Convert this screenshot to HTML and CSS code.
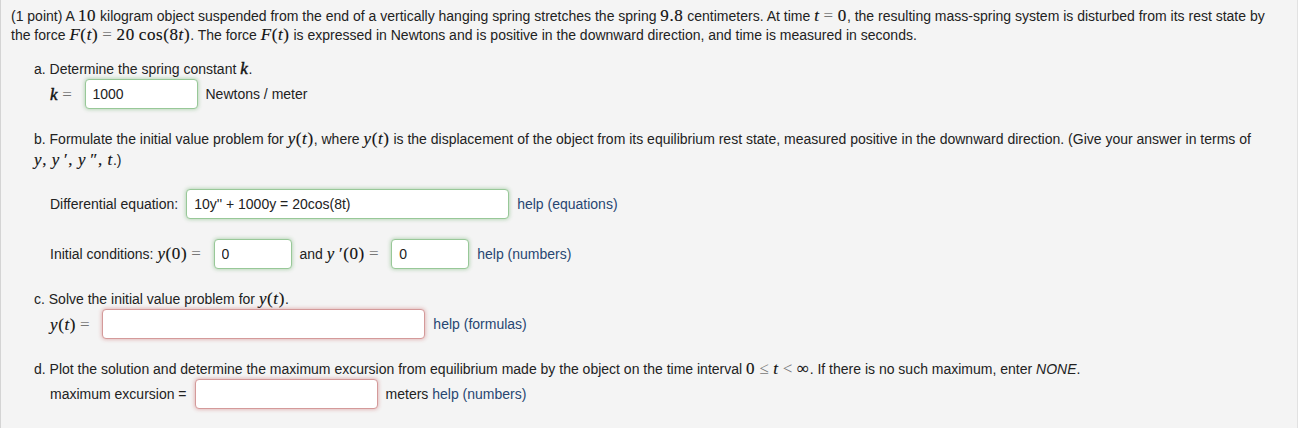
FILE: index.html
```html
<!DOCTYPE html>
<html>
<head>
<meta charset="utf-8">
<link rel="stylesheet" href="styles.css">
</head>
<body>
<div class="problem">
  <p class="intro">(1 point) A <span class="m">10</span> kilogram object suspended from the end of a vertically hanging spring stretches the spring <span class="m">9.8</span> centimeters. At time <span class="m"><i>t</i><span class="eq">=</span><span>0</span></span>, the resulting mass-spring system is disturbed from its rest state by the force <span class="m"><i>F</i><span>(</span><i>t</i><span>)</span><span class="eq">=</span><span>20&thinsp;cos(8</span><i>t</i><span>)</span></span>. The force <span class="m"><i>F</i><span>(</span><i>t</i><span>)</span></span> is expressed in Newtons and is positive in the downward direction, and time is measured in seconds.</p>

  <p class="q qa">a. Determine the spring constant <i class="m b">k</i>.</p>
  <div class="row">
    <span class="m"><i class="b">k</i><span class="eq">=</span></span>
    <input class="ans ok w113" type="text" value="1000" readonly>
    <span>Newtons / meter</span>
  </div>

  <p class="q qb">b. Formulate the initial value problem for <span class="m"><i>y</i><span>(</span><i>t</i><span>)</span></span>, where <span class="m"><i>y</i><span>(</span><i>t</i><span>)</span></span> is the displacement of the object from its equilibrium rest state, measured positive in the downward direction. (Give your answer in terms of <span class="m"><i>y</i><span>, </span><i>y</i><span>&thinsp;′, </span><i>y</i><span>&thinsp;″, </span><i>t</i></span>.)</p>
  <div class="row sp-b">
    <span>Differential equation:</span>
    <input class="ans ok w323" type="text" value="10y'' + 1000y = 20cos(8t)" readonly>
    <a class="help">help (equations)</a>
  </div>
  <div class="row sp">
    <span class="lbl"><span>Initial conditions: </span><span class="m"><i>y</i><span>(0)</span><span class="eq">=</span></span></span>
    <input class="ans ok w78" type="text" value="0" readonly>
    <span class="lbl"><span>and </span><span class="m"><i>y</i><span>&thinsp;′(0)</span><span class="eq">=</span></span></span>
    <input class="ans ok w78" type="text" value="0" readonly>
    <a class="help">help (numbers)</a>
  </div>

  <p class="q qc">c. Solve the initial value problem for <span class="m"><i>y</i><span>(</span><i>t</i><span>)</span></span>.</p>
  <div class="row">
    <span class="m"><i>y</i><span>(</span><i>t</i><span>)</span><span class="eq">=</span></span>
    <input class="ans bad w323" type="text" value="" readonly>
    <a class="help">help (formulas)</a>
  </div>

  <p class="q qc">d. Plot the solution and determine the maximum excursion from equilibrium made by the object on the time interval <span class="m"><span>0</span><span class="eq">≤</span><i>t</i><span class="eq">&lt;</span><span>∞</span></span>. If there is no such maximum, enter <em>NONE</em>.</p>
  <div class="row">
    <span>maximum excursion =</span>
    <input class="ans bad w183" type="text" value="" readonly>
    <span class="lbl"><span>meters </span><a class="help">help (numbers)</a></span>
  </div>
</div>
</body>
</html>
```
FILE: styles.css
```css
html, body {
  margin: 0;
  padding: 0;
  background: #f4f4f4;
}
.problem {
  box-sizing: border-box;
  width: 1298px;
  min-height: 428px;
  padding: 7px 20px 20px 10px;
  border-left: 1px solid #d4d4d4;
  border-right: 1px solid #e2e2e2;
  font-family: "Liberation Sans", Arial, sans-serif;
  font-size: 14px;
  color: #222;
  line-height: 19px;
}
.problem p { margin: 0; }
.m {
  font-family: "Liberation Serif", "Times New Roman", serif;
  font-size: 17px;
  line-height: 17px;
  color: #111;
  white-space: nowrap;
  letter-spacing: 0.6px;
  -webkit-text-stroke: 0.15px #111;
}
.m i, i.m { font-style: italic; }
.m .b, .m.b { -webkit-text-stroke: 0.45px #111; }
.eq {
  color: #777;
  -webkit-text-stroke: 0;
  margin: 0 0.24em;
}
.q { padding-left: 23px; }
.qa { margin-top: 15px !important; }
.qb { margin-top: 20px !important; line-height: 21px; }
.qc { margin-top: 21px !important; }
.row {
  display: flex;
  align-items: center;
  gap: 8px;
  padding-left: 39px;
  height: 30px;
}
.sp-b { margin-top: 18px; }
.sp { margin-top: 20px; }
.ans {
  box-sizing: border-box;
  height: 30px;
  margin: 0;
  padding: 0 7px;
  border-radius: 4px;
  background: #fff;
  font-family: "Liberation Sans", Arial, sans-serif;
  font-size: 14px;
  color: #222;
  outline: none;
}
.ok {
  border: 1px solid #98c898;
  box-shadow: 0 0 4px rgba(60, 150, 60, 0.45);
}
.bad {
  border: 1px solid #d49a9a;
  box-shadow: 0 0 4px rgba(190, 60, 60, 0.45);
}
.w113 { width: 113px; }
.w323 { width: 323px; }
.w78 { width: 78px; }
.w183 { width: 183px; }
.help { color: #274672; text-decoration: none; }
em { font-style: italic; }
```
